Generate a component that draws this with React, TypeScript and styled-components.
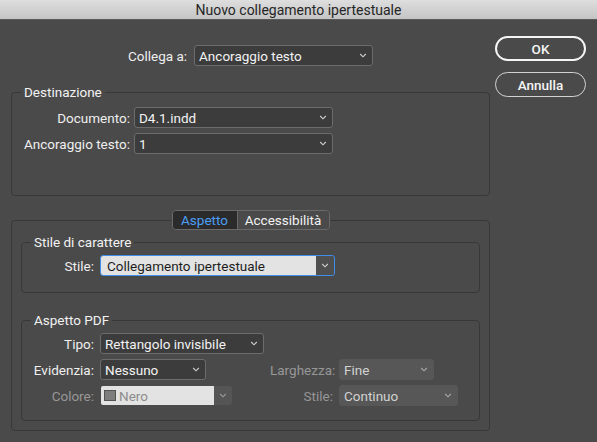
import styled, { createGlobalStyle } from 'styled-components';

const GlobalStyle = createGlobalStyle`
  *, *::before, *::after {
    box-sizing: border-box;
  }

  html, body {
    margin: 0;
    padding: 0;
  }

  body {
    background: #4a4a4a;
    font-family: Roboto, 'Liberation Sans', Arial, sans-serif;
    font-size: 13.5px;
    color: #efefef;
    overflow: hidden;
  }
`;

const Window = styled.div`
  width: 597px;
  height: 442px;
  display: flex;
  flex-direction: column;
  background: #4a4a4a;
`;

const TitleBar = styled.div`
  flex: none;
  height: 20px;
  display: flex;
  align-items: center;
  justify-content: center;
  background: linear-gradient(#dedede, #c4c4c4);
  border-bottom: 1px solid #5a5a5a;
  color: #262626;
  font-size: 14px;
`;

const Body = styled.div`
  display: flex;
  align-items: flex-start;
  padding-left: 11px;
`;

const Main = styled.div`
  width: 479px;
  display: flex;
  flex-direction: column;
`;

const Side = styled.div`
  width: 91px;
  margin-left: 5px;
  padding-top: 16px;
  display: flex;
  flex-direction: column;
  gap: 11px;
`;

const PushButton = styled.button<{ $default?: boolean }>`
  height: 25px;
  border-radius: 13px;
  border: ${(p) => (p.$default ? '2px solid #f5f5f5' : '1px solid #d2d2d2')};
  background: transparent;
  color: #f5f5f5;
  font-family: inherit;
  font-size: 13.5px;
  font-weight: 500;
  padding: 0;
`;

const TopRow = styled.div`
  margin-top: 25px;
  display: flex;
  align-items: center;
  justify-content: center;
  gap: 7px;
`;

const Group = styled.fieldset<{ $gap?: number }>`
  margin: ${(p) => p.$gap ?? 0}px 0 0 0;
  padding: 0;
  min-width: 0;
  border: 1px solid #383838;
  border-radius: 4px;
`;

const Legend = styled.legend`
  margin-left: 9px;
  padding: 0 3px;
  line-height: 14px;
  color: #f2f2f2;
`;

const TabLegend = styled.legend`
  margin: 0 auto;
  padding: 0;
`;

const Inner = styled.div<{ $pad: string }>`
  padding: ${(p) => p.$pad};
`;

const FormGrid = styled.div<{ $cols: string; $gap: number }>`
  display: grid;
  grid-template-columns: ${(p) => p.$cols};
  grid-auto-rows: 21px;
  column-gap: ${(p) => p.$gap}px;
  row-gap: 5px;
  align-items: center;
`;

const Label = styled.span<{ $muted?: boolean }>`
  text-align: right;
  white-space: nowrap;
  color: ${(p) => (p.$muted ? '#979797' : '#efefef')};
`;

const SelectBox = styled.div<{ $w: number; $disabled?: boolean; $span?: boolean }>`
  width: ${(p) => p.$w}px;
  height: 21px;
  display: flex;
  align-items: center;
  padding: 0 5px 0 4px;
  border-radius: 3px;
  background: ${(p) => (p.$disabled ? '#575757' : '#3c3c3c')};
  border: 1px solid ${(p) => (p.$disabled ? '#575757' : '#6c6c6c')};
  color: ${(p) => (p.$disabled ? '#d2d2d2' : '#f3f3f3')};
  grid-column: ${(p) => (p.$span ? 'span 3' : 'auto')};
`;

const SelectText = styled.span`
  flex: 1;
  white-space: nowrap;
  overflow: hidden;
`;

const Combo = styled.div<{ $w: number; $focus?: boolean }>`
  width: ${(p) => p.$w}px;
  height: 21px;
  display: flex;
  border: 1px solid ${(p) => (p.$focus ? '#3f8ee8' : 'transparent')};
  border-radius: 3px;
  overflow: hidden;
`;

const ComboField = styled.div<{ $disabled?: boolean }>`
  flex: 1;
  display: flex;
  align-items: center;
  gap: 3px;
  padding-left: ${(p) => (p.$disabled ? 3 : 6)}px;
  background: #e3e3e3;
  color: ${(p) => (p.$disabled ? '#8c8c8c' : '#1d1d1d')};
  white-space: nowrap;
`;

const ComboButton = styled.div<{ $disabled?: boolean }>`
  width: 18px;
  display: flex;
  align-items: center;
  justify-content: center;
  background: ${(p) => (p.$disabled ? '#555555' : '#4f4f4f')};
  border-radius: 0 2px 2px 0;
`;

const Swatch = styled.span`
  width: 12px;
  height: 11px;
  background: #7e7e7e;
  border: 1px solid #545454;
`;

const TabBar = styled.div`
  display: flex;
  height: 20px;
  border: 1px solid #6a6a6a;
  border-radius: 4px;
  overflow: hidden;
`;

const Tab = styled.div<{ $w: number; $active?: boolean }>`
  width: ${(p) => p.$w}px;
  display: flex;
  align-items: center;
  justify-content: center;
  background: ${(p) => (p.$active ? '#2b2b2b' : '#4a4a4a')};
  color: ${(p) => (p.$active ? '#4c9ff6' : '#f2f2f2')};

  & + & {
    border-left: 1px solid #6a6a6a;
  }
`;

const Chevron = ({ color = '#d0d0d0' }: { color?: string }) => (
  <svg width="8" height="5" viewBox="0 0 8 5" fill="none">
    <path d="M1.2 1 L4 3.8 L6.8 1" stroke={color} strokeWidth="1.1" />
  </svg>
);

type SelectProps = {
  value: string;
  width: number;
  disabled?: boolean;
  span?: boolean;
};

const Select = ({ value, width, disabled, span }: SelectProps) => (
  <SelectBox $w={width} $disabled={disabled} $span={span}>
    <SelectText>{value}</SelectText>
    <Chevron color={disabled ? '#a8a8a8' : '#d0d0d0'} />
  </SelectBox>
);

const App = () => {
  return (
    <>
      <GlobalStyle />
      <Window>
        <TitleBar>Nuovo collegamento ipertestuale</TitleBar>
        <Body>
          <Main>
            <TopRow>
              <Label>Collega a:</Label>
              <Select value="Ancoraggio testo" width={179} />
            </TopRow>

            <Group $gap={19}>
              <Legend>Destinazione</Legend>
              <Inner $pad="8px 0 41px 0">
                <FormGrid $cols="118px 199px" $gap={4}>
                  <Label>Documento:</Label>
                  <Select value="D4.1.indd" width={199} />
                  <Label>Ancoraggio testo:</Label>
                  <Select value="1" width={199} />
                </FormGrid>
              </Inner>
            </Group>

            <Group $gap={14}>
              <TabLegend>
                <TabBar>
                  <Tab $w={64} $active>
                    Aspetto
                  </Tab>
                  <Tab $w={92}>Accessibilità</Tab>
                </TabBar>
              </TabLegend>
              <Inner $pad="5px 9px 9px 9px">
                <Group>
                  <Legend>Stile di carattere</Legend>
                  <Inner $pad="6px 0 16px 0">
                    <FormGrid $cols="72px auto" $gap={6}>
                      <Label>Stile:</Label>
                      <Combo $w={235} $focus>
                        <ComboField>Collegamento ipertestuale</ComboField>
                        <ComboButton>
                          <Chevron color="#cfcfcf" />
                        </ComboButton>
                      </Combo>
                    </FormGrid>
                  </Inner>
                </Group>

                <Group $gap={20}>
                  <Legend>Aspetto PDF</Legend>
                  <Inner $pad="6px 0 14px 0">
                    <FormGrid $cols="72px 164px 63px auto" $gap={6}>
                      <Label>Tipo:</Label>
                      <Select value="Rettangolo invisibile" width={164} span />

                      <Label>Evidenzia:</Label>
                      <Select value="Nessuno" width={106} />
                      <Label $muted>Larghezza:</Label>
                      <Select value="Fine" width={95} disabled />

                      <Label $muted>Colore:</Label>
                      <Combo $w={133}>
                        <ComboField $disabled>
                          <Swatch />
                          Nero
                        </ComboField>
                        <ComboButton $disabled>
                          <Chevron color="#9a9a9a" />
                        </ComboButton>
                      </Combo>
                      <Label $muted>Stile:</Label>
                      <Select value="Continuo" width={119} disabled />
                    </FormGrid>
                  </Inner>
                </Group>
              </Inner>
            </Group>
          </Main>

          <Side>
            <PushButton $default>OK</PushButton>
            <PushButton>Annulla</PushButton>
          </Side>
        </Body>
      </Window>
    </>
  );
};

export default App;
